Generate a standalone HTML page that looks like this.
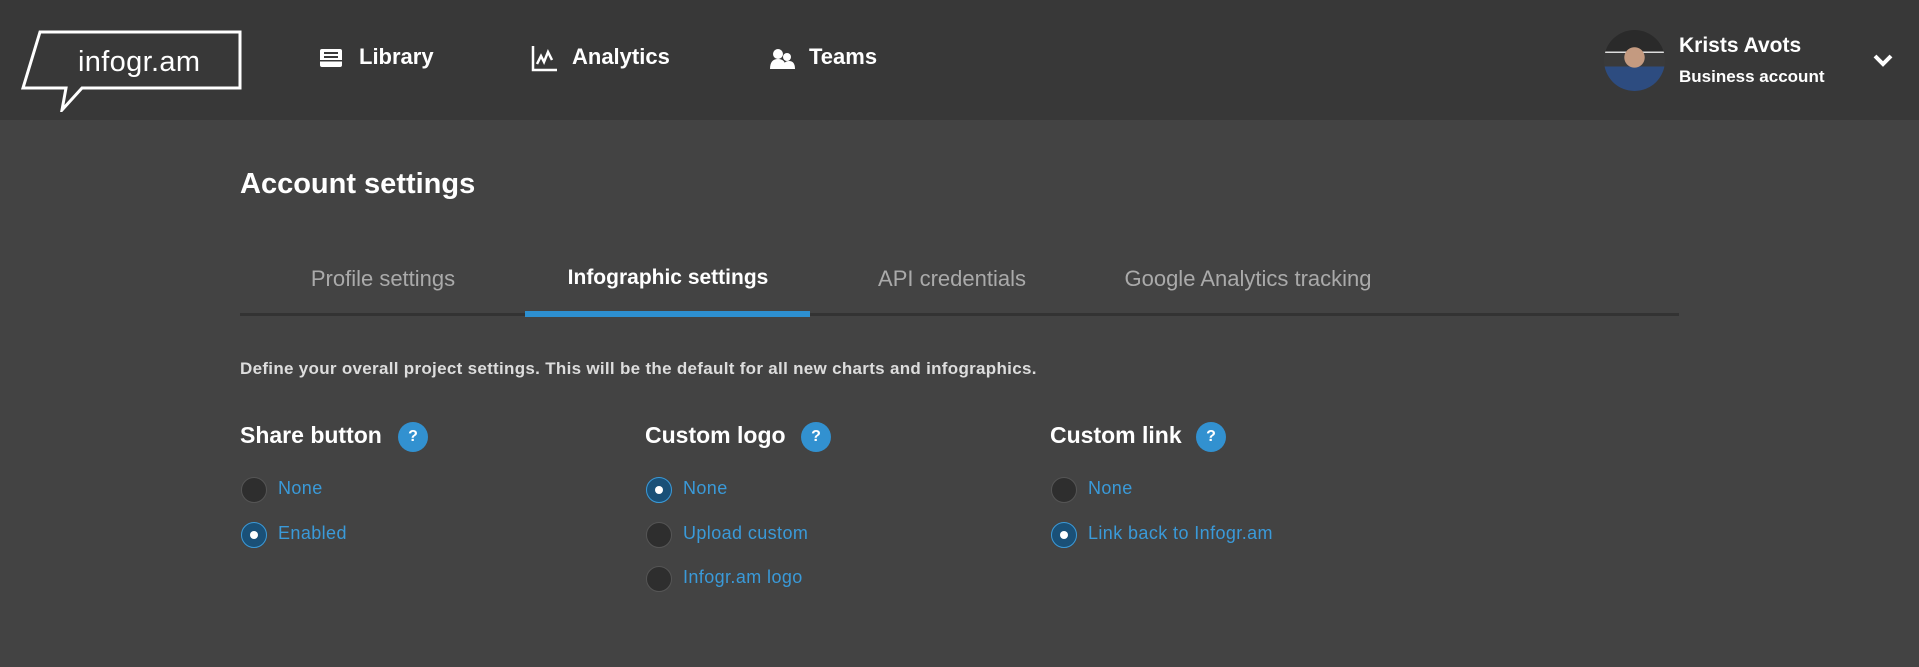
<!DOCTYPE html>
<html><head><style>
body{margin:0;width:1919px;height:667px;background:#434343;font-family:"Liberation Sans",sans-serif;position:relative;overflow:hidden;color:#fff}
.a{position:absolute;white-space:nowrap}
header{position:absolute;left:0;top:0;width:1919px;height:120px;background:#383838}
.nav{font-size:22px;font-weight:bold;top:44px}
.tab{font-size:22px;top:265px;color:#aaa;transform:translateX(-50%)}
.h{font-size:23px;font-weight:bold;top:422px}
.q{width:30px;height:30px;border-radius:50%;background:#3291d0;color:#fff;font-size:16px;font-weight:bold;text-align:center;line-height:30px;top:422px}
.r{width:26px;height:26px;border-radius:50%;background:#2e2e2e;border:1px solid #555;box-sizing:border-box}
.r.on{background:#1a5077;border:1px solid #3a9ad9}
.r.on:after{content:"";position:absolute;left:8px;top:8px;width:8px;height:8px;border-radius:50%;background:#fff}
.l{font-size:18px;color:#3a9ad9;letter-spacing:.4px}
</style></head><body>
<header>
<svg class="a" style="left:20px;top:30px" width="224" height="82"><path d="M20 2 H220 V58 H62 L42 80 L46 58 H3 Z" fill="none" stroke="#fff" stroke-width="3"/><text x="58" y="41" fill="#fff" font-family="Liberation Sans" font-size="29" textLength="122">infogr.am</text></svg>
<svg class="a" style="left:319px;top:47px" width="26" height="22"><rect x="1" y="2" width="22" height="18" rx="2" fill="#fff"/><rect x="5" y="5" width="14" height="2" fill="#383838"/><rect x="5" y="9" width="14" height="2" fill="#383838"/><rect x="1" y="13" width="22" height="1.5" fill="#383838"/></svg>
<div class="a nav" style="left:359px">Library</div>
<svg class="a" style="left:531px;top:44px" width="28" height="28"><path d="M2 2 V26 H26" fill="none" stroke="#fff" stroke-width="2.5"/><path d="M6 20 L10 12 L13 18 L17 8 L21 16" fill="none" stroke="#fff" stroke-width="2.5"/></svg>
<div class="a nav" style="left:572px">Analytics</div>
<svg class="a" style="left:769px;top:47px" width="28" height="24"><circle cx="9" cy="7" r="5" fill="#fff"/><path d="M1 22 Q1 12 9 12 Q17 12 17 22Z" fill="#fff"/><circle cx="18" cy="10" r="4" fill="#fff"/><path d="M14 22 Q14 14 20 14 Q26 14 26 22Z" fill="#fff"/></svg>
<div class="a nav" style="left:809px">Teams</div>
<div class="a" style="left:1604px;top:30px;width:61px;height:61px;border-radius:50%;background:radial-gradient(circle at 50% 45%,#c49a80 0 22%,transparent 23%),linear-gradient(#2a2a2a 0 35%,#ddd 35% 38%,#3a3a3a 38% 60%,#2d4c80 60%)"></div>
<div class="a" style="left:1679px;top:34px;font-size:21px;font-weight:bold">Krists Avots</div>
<div class="a" style="left:1679px;top:67px;font-size:17px;font-weight:bold">Business account</div>
<svg class="a" style="left:1872px;top:53px" width="22" height="16"><path d="M3 3 L11 11 L19 3" fill="none" stroke="#fff" stroke-width="4"/></svg>
</header>
<div class="a" style="left:240px;top:168px;font-size:29px;font-weight:bold">Account settings</div>
<div class="a tab" style="left:383px;top:266px">Profile settings</div>
<div class="a tab" style="left:668px;top:266px;color:#fff;font-weight:bold;font-size:21px">Infographic settings</div>
<div class="a tab" style="left:952px;top:266px">API credentials</div>
<div class="a tab" style="left:1248px;top:266px">Google Analytics tracking</div>
<div class="a" style="left:240px;top:313px;width:1439px;height:3px;background:#333"></div>
<div class="a" style="left:525px;top:311px;width:285px;height:6px;background:#2d8fd0"></div>
<div class="a" style="left:240px;top:359px;font-size:17px;font-weight:bold;color:#ddd;letter-spacing:.3px">Define your overall project settings. This will be the default for all new charts and infographics.</div>

<div class="a h" style="left:240px">Share button</div><div class="a q" style="left:398px">?</div>
<div class="a h" style="left:645px">Custom logo</div><div class="a q" style="left:801px">?</div>
<div class="a h" style="left:1050px">Custom link</div><div class="a q" style="left:1196px">?</div>

<div class="a r" style="left:241px;top:477px"></div><div class="a l" style="left:278px;top:478px">None</div>
<div class="a r on" style="left:241px;top:522px"></div><div class="a l" style="left:278px;top:523px">Enabled</div>

<div class="a r on" style="left:646px;top:477px"></div><div class="a l" style="left:683px;top:478px">None</div>
<div class="a r" style="left:646px;top:522px"></div><div class="a l" style="left:683px;top:523px">Upload custom</div>
<div class="a r" style="left:646px;top:566px"></div><div class="a l" style="left:683px;top:567px">Infogr.am logo</div>

<div class="a r" style="left:1051px;top:477px"></div><div class="a l" style="left:1088px;top:478px">None</div>
<div class="a r on" style="left:1051px;top:522px"></div><div class="a l" style="left:1088px;top:523px">Link back to Infogr.am</div>
</body></html>
